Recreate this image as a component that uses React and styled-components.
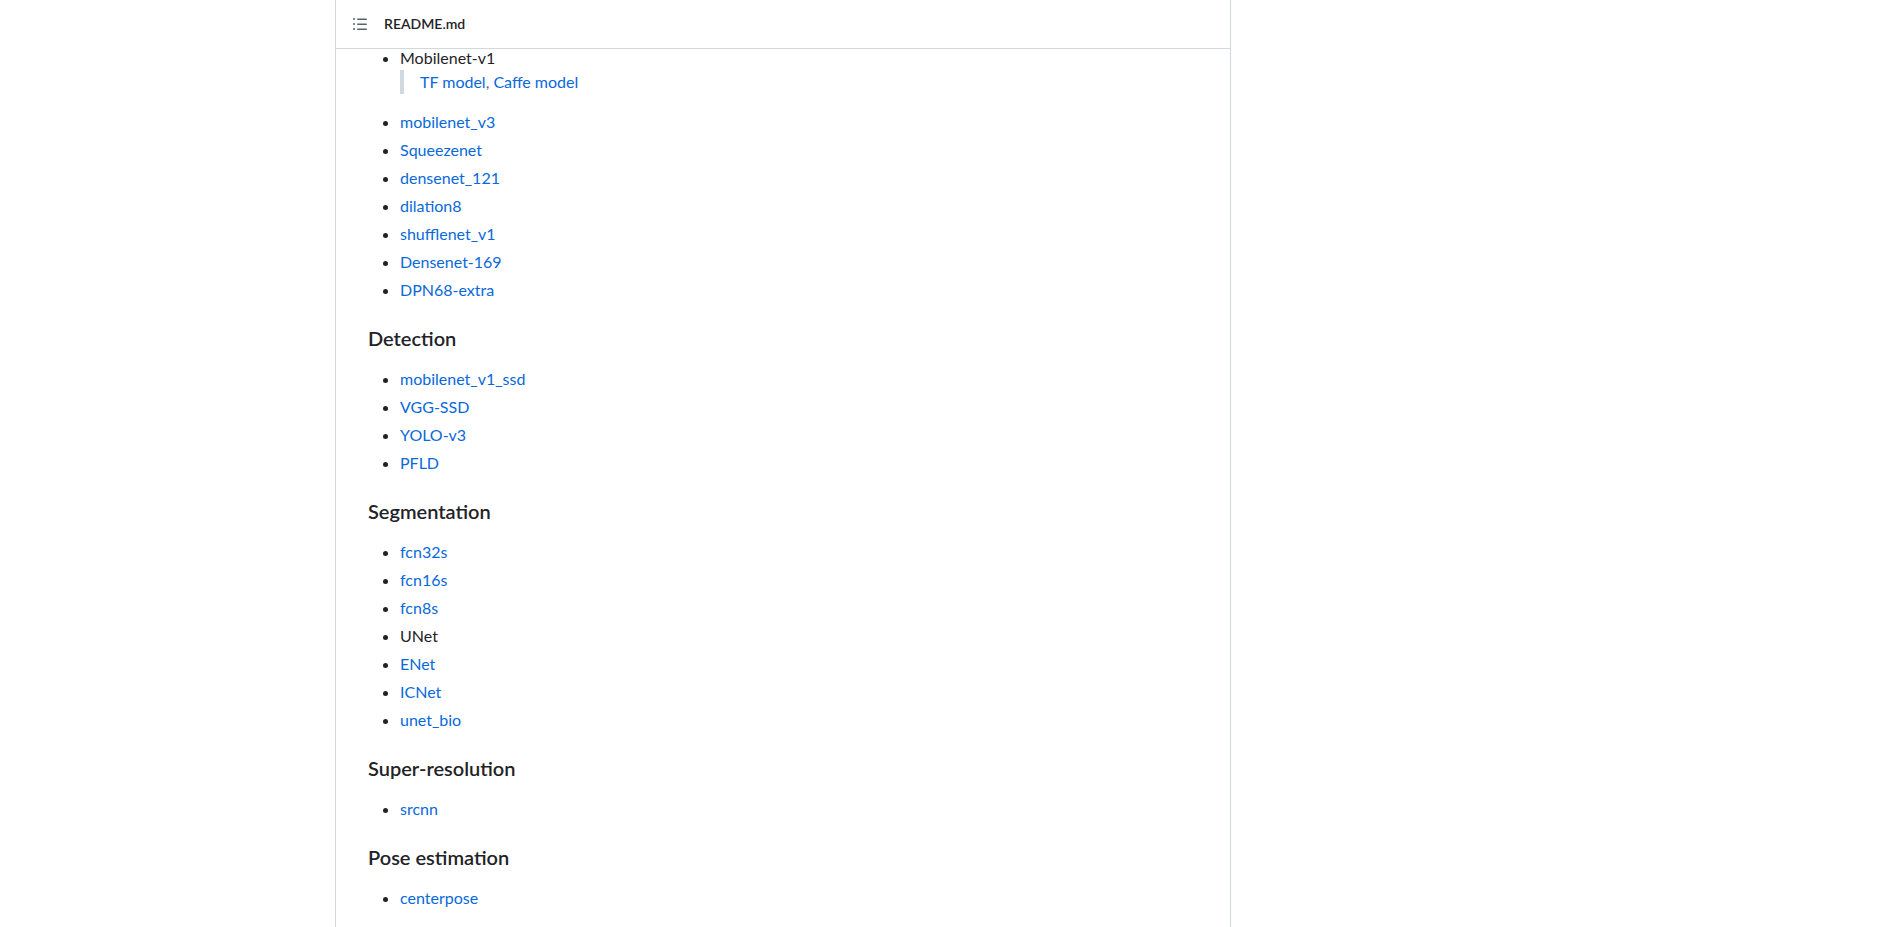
import React from "react";
import styled, { createGlobalStyle } from "styled-components";

const Global = createGlobalStyle`
  html, body { margin: 0; padding: 0; background: #ffffff; }
  body {
    font-family: Lato, "Noto Sans", "Liberation Sans", sans-serif;
    color: #1f2328;
    overflow: hidden;
  }
`;

const Page = styled.div`
  height: 927px;
  overflow: hidden;
  padding-left: 335px;
  box-sizing: border-box;
`;

const Panel = styled.section`
  width: 896px;
  min-height: 927px;
  box-sizing: border-box;
  border-left: 1px solid #d1d9e0;
  border-right: 1px solid #d1d9e0;
  background: #ffffff;
`;

const Header = styled.header`
  height: 49px;
  box-sizing: border-box;
  border-bottom: 1px solid #d1d9e0;
  display: flex;
  align-items: center;
  padding: 0 8px;
  gap: 8px;
  position: relative;
  z-index: 1;
  background: #ffffff;
`;

const IconButton = styled.button`
  width: 32px;
  height: 32px;
  border: 0;
  background: transparent;
  padding: 0;
  display: flex;
  align-items: center;
  justify-content: center;
  color: #59636e;
  cursor: pointer;
`;

const FileName = styled.h2`
  margin: 0;
  font-size: 14px;
  font-weight: 600;
  color: #1f2328;
  line-height: 20px;
`;

const Article = styled.article`
  padding: 0 32px;
  margin-top: -3px;
  font-size: 16px;
  line-height: 1.5;
`;

const List = styled.ul`
  margin: 0 0 16px;
  padding-left: 2em;
  list-style: disc;
`;

const Item = styled.li`
  margin-top: ${(p) => (p.$first ? "0" : "0.25em")};
  color: #1f2328;
`;

const Link = styled.a`
  color: #0969da;
  text-decoration: none;
`;

const Quote = styled.blockquote`
  margin: 0 0 16px;
  padding: 0 1em;
  border-left: 0.25em solid #d1d9e0;
  color: #59636e;
`;

const Heading = styled.h3`
  margin: 24px 0 16px;
  font-size: 1.25em;
  font-weight: 600;
  line-height: 1.25;
  color: #1f2328;
`;

const ListIcon = () => (
  <svg width="16" height="16" viewBox="0 0 16 16" fill="currentColor" aria-hidden="true">
    <path d="M5.75 2.5h8.5a.75.75 0 0 1 0 1.5h-8.5a.75.75 0 0 1 0-1.5Zm0 5h8.5a.75.75 0 0 1 0 1.5h-8.5a.75.75 0 0 1 0-1.5Zm0 5h8.5a.75.75 0 0 1 0 1.5h-8.5a.75.75 0 0 1 0-1.5ZM2 14a1 1 0 1 1 0-2 1 1 0 0 1 0 2Zm1-6a1 1 0 1 1-2 0 1 1 0 0 1 2 0ZM2 4a1 1 0 1 1 0-2 1 1 0 0 1 0 2Z" />
  </svg>
);

const sections = [
  {
    title: "Detection",
    items: [
      { t: "mobilenet_v1_ssd", link: true },
      { t: "VGG-SSD", link: true },
      { t: "YOLO-v3", link: true },
      { t: "PFLD", link: true },
    ],
  },
  {
    title: "Segmentation",
    items: [
      { t: "fcn32s", link: true },
      { t: "fcn16s", link: true },
      { t: "fcn8s", link: true },
      { t: "UNet", link: false },
      { t: "ENet", link: true },
      { t: "ICNet", link: true },
      { t: "unet_bio", link: true },
    ],
  },
  { title: "Super-resolution", items: [{ t: "srcnn", link: true }] },
  { title: "Pose estimation", items: [{ t: "centerpose", link: true }] },
];

const classification = [
  "mobilenet_v3",
  "Squeezenet",
  "densenet_121",
  "dilation8",
  "shufflenet_v1",
  "Densenet-169",
  "DPN68-extra",
];

export default function App() {
  return (
    <>
      <Global />
      <Page>
        <Panel>
          <Header>
            <IconButton aria-label="Outline">
              <ListIcon />
            </IconButton>
            <FileName>README.md</FileName>
          </Header>
          <Article>
            <List>
              <Item $first>
                Mobilenet-v1
                <Quote>
                  <Link href="#">TF model</Link>, <Link href="#">Caffe model</Link>
                </Quote>
              </Item>
              {classification.map((t) => (
                <Item key={t}>
                  <Link href="#">{t}</Link>
                </Item>
              ))}
            </List>
            {sections.map((s) => (
              <React.Fragment key={s.title}>
                <Heading>{s.title}</Heading>
                <List>
                  {s.items.map((it, i) => (
                    <Item key={it.t} $first={i === 0}>
                      {it.link ? <Link href="#">{it.t}</Link> : it.t}
                    </Item>
                  ))}
                </List>
              </React.Fragment>
            ))}
          </Article>
        </Panel>
      </Page>
    </>
  );
}
